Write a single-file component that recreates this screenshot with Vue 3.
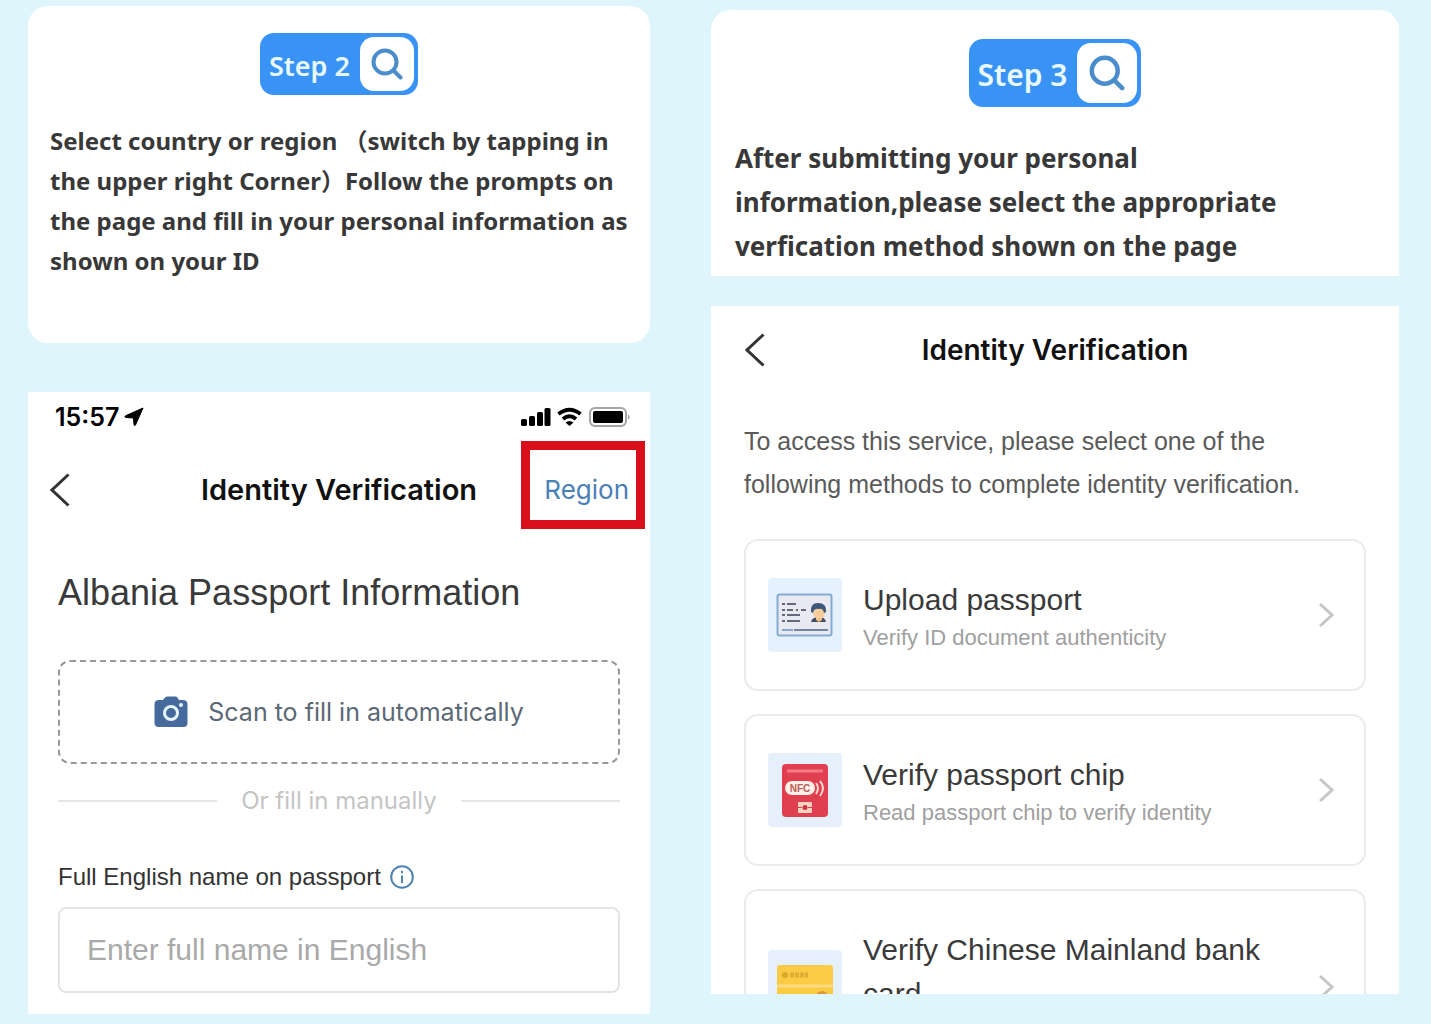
<script setup>
import { ref } from "vue";

const fullName = ref("");

const methods = [
  {
    id: "passport",
    title: ["Upload passport"],
    text: "Verify ID document authenticity",
  },
  {
    id: "chip",
    title: ["Verify passport chip"],
    text: "Read passport chip to verify identity",
  },
  {
    id: "bank",
    title: ["Verify Chinese Mainland bank", "card"],
    text: "",
  },
];
</script>

<template>
  <main class="page">
    <div class="column">
      <section class="step">
        <h2 class="badge">
          <span class="name">Step 2</span>
          <span class="lens">
            <svg viewBox="0 0 32 32" aria-hidden="true">
              <circle cx="14" cy="14" r="11.500" />
              <path d="M22.500 22.500L29.500 29.500" />
            </svg>
          </span>
        </h2>
        <p>
          Select country or region （switch by tapping in<br />
          the upper right Corner）Follow the prompts on<br />
          the page and fill in your personal information as<br />
          shown on your ID
        </p>
      </section>

      <section class="screen">
        <div class="status">
          <span class="time">15:57</span>
          <svg class="arrow" viewBox="0 0 20 20" aria-hidden="true">
            <path
              d="M19 1L11.500 18Q10.500 19.500 10 17.500L9.500 11L2 10.500Q0 10 1.500 8.800Z"
              stroke="#000"
              stroke-linejoin="round"
            />
          </svg>
          <svg class="signals" viewBox="0 0 110 20" aria-hidden="true">
            <rect x="0" y="12" width="6" height="7" rx="1.500" />
            <rect x="8" y="9" width="6" height="10" rx="1.500" />
            <rect x="16" y="5" width="6" height="14" rx="1.500" />
            <rect x="23.500" y="1" width="6" height="18" rx="1.500" />
            <path class="wave" d="M37.500 7Q48.500 -1.500 59.500 7" />
            <path class="wave" d="M42 12Q48.500 6.500 55 12" />
            <path d="M44.500 15.500Q48.500 12.500 52.500 15.500L48.500 19Z" />
            <rect class="shell" x="69" y="1" width="36" height="18" rx="5" />
            <rect x="72" y="4" width="30" height="12" rx="2" />
            <path class="tip" d="M107 7Q110 10 107 13Z" />
          </svg>
        </div>

        <header class="bar with-region">
          <button class="back" type="button" aria-label="Back">
            <svg viewBox="0 0 20 34" aria-hidden="true"><path d="M18.500 1.500L2 17L18.500 32.500" /></svg>
          </button>
          <h1>Identity Verification</h1>
          <button class="region" type="button">Region</button>
        </header>

        <form class="form" @submit.prevent>
          <h3>Albania Passport Information</h3>
          <button class="scan" type="button">
            <svg viewBox="0 0 34 32" aria-hidden="true">
              <path
                class="body"
                d="M5 4H9L11 1.500Q12 0.500 13.500 0.500H21Q22.500 0.500 23.500 1.500L25 4H29Q33.500 4 33.500 8.500V27Q33.500 31 29.500 31H5Q0.500 31 0.500 27V8.500Q0.500 4 5 4Z"
              />
              <circle class="ring" cx="17" cy="17" r="6.500" />
              <circle class="dot" cx="27" cy="9" r="2" />
            </svg>
            <span>Scan to fill in automatically</span>
          </button>
          <div class="or"><span>Or fill in manually</span></div>
          <label for="full-name">
            Full English name on passport
            <svg viewBox="0 0 24 24" aria-hidden="true">
              <circle cx="12" cy="12" r="10.800" />
              <path d="M12 10.500V18M12 6V8.300" />
            </svg>
          </label>
          <input id="full-name" v-model="fullName" type="text" placeholder="Enter full name in English" />
        </form>
      </section>
    </div>

    <div class="column right">
      <section class="step large">
        <h2 class="badge">
          <span class="name">Step 3</span>
          <span class="lens">
            <svg viewBox="0 0 32 32" aria-hidden="true">
              <circle cx="14" cy="14" r="11.500" />
              <path d="M22.500 22.500L29.500 29.500" />
            </svg>
          </span>
        </h2>
        <p>
          After submitting your personal<br />
          information,please select the appropriate<br />
          verfication method shown on the page
        </p>
      </section>

      <section class="screen clipped">
        <header class="bar">
          <button class="back" type="button" aria-label="Back">
            <svg viewBox="0 0 20 34" aria-hidden="true"><path d="M18.500 1.500L2 17L18.500 32.500" /></svg>
          </button>
          <h1>Identity Verification</h1>
        </header>

        <div class="methods">
          <p>
            To access this service, please select one of the<br />
            following methods to complete identity verification.
          </p>
          <button v-for="m in methods" :key="m.id" class="method" type="button">
            <svg v-if="m.id === 'passport'" class="picture" viewBox="0 0 74 74" aria-hidden="true">
              <rect width="74" height="74" rx="4" fill="#e5f2fd" />
              <rect x="9.500" y="16.500" width="54" height="41" rx="2" fill="#e9eaf1" stroke="#84abd0" stroke-width="2" />
              <g stroke="#626a7b" stroke-width="2">
                <path d="M14 26H17M19 26H28M14 32H17M19 32H25M28 32H30M33 32H38M14 37H17M19 37H32M14 43H17M19 43H32" />
                <path d="M14 52H25" stroke="#89a7cb" />
                <path d="M26 52H60" stroke="#7184a3" />
              </g>
              <path d="M43 44Q44 39 51 39Q57 39 58 44Z" fill="#454e60" />
              <path d="M48 38H54V42L51 44L48 42Z" fill="#f2bd83" />
              <ellipse cx="51" cy="34" rx="6" ry="7" fill="#f5cc9c" />
              <path d="M43 34Q42 25 50 25Q59 25 58 34L56 35Q55 30 51 31Q46 30 45 35Z" fill="#3e5878" />
            </svg>
            <svg v-else-if="m.id === 'chip'" class="picture" viewBox="0 0 74 74" aria-hidden="true">
              <rect width="74" height="74" rx="4" fill="#e5f0fb" />
              <rect x="14" y="11" width="46" height="53" rx="4" fill="#df3f4e" />
              <path d="M19 18H55" stroke="#f67b84" stroke-width="3" />
              <rect x="17" y="28" width="30" height="14" rx="7" fill="#fff0e8" />
              <text x="32" y="39" text-anchor="middle">NFC</text>
              <path d="M48 30Q52 35 48 41M52 28Q58 35 52 43" fill="none" stroke="#ffd7cf" stroke-width="2" />
              <rect x="30" y="49" width="14" height="11" rx="1" fill="#ffd1c0" />
              <path d="M30 54.500H34M40 54.500H44" stroke="#df3f4e" />
              <circle cx="37" cy="54.500" r="2.500" fill="#c83440" />
            </svg>
            <svg v-else class="picture" viewBox="0 0 74 74" aria-hidden="true">
              <rect width="74" height="74" rx="4" fill="#e6f0fd" />
              <rect x="9" y="15" width="56" height="44" rx="3" fill="#fbcb43" />
              <circle cx="17" cy="25" r="3" fill="#d9a52c" />
              <path d="M22 25H40" stroke="#e0ad34" stroke-width="5" stroke-dasharray="4 1" />
              <path d="M9 36H65" stroke="#fddc83" stroke-width="3" />
              <circle cx="54" cy="47" r="6" fill="#df963b" />
            </svg>
            <span class="words">
              <span v-for="line in m.title" :key="line" class="title">{{ line }}</span>
              <span class="text">{{ m.text }}</span>
            </span>
            <svg class="next" viewBox="0 0 16 26" aria-hidden="true"><path d="M2 2L14 13L2 24" /></svg>
          </button>
        </div>
      </section>
    </div>
  </main>
</template>

<style>
body {
  margin: 0;
  background: #dff5fc;
}
</style>

<style scoped>
* {
  box-sizing: border-box;
}

h1,
h2,
h3,
p {
  margin: 0;
}

button {
  padding: 0;
  border: none;
  background: none;
  color: inherit;
  cursor: pointer;
}

svg {
  flex: none;
}

.page {
  display: grid;
  grid-template-columns: 622fr 688fr;
  column-gap: 61px;
  height: 100vh;
  padding: 0 32px 0 28px;
  overflow: hidden;
  font-family: "Liberation Sans", Arial, sans-serif;
}

.column {
  display: flex;
  flex-direction: column;
  gap: 49px;
  min-width: 0;
  min-height: 0;
  padding: 6px 0 10px;
}

.column.right {
  gap: 30px;
  padding: 10px 0 30px;
}

/* step cards */
.step {
  display: flex;
  flex-direction: column;
  align-items: center;
  padding: 27px 22px 62px;
  border-radius: 20px;
  background: #fff;
}

.step p {
  align-self: stretch;
  margin-top: 26px;
  color: #383838;
  font: 700 24px/40px "Noto Sans", "Noto Sans CJK SC", sans-serif;
  white-space: nowrap;
}

.badge {
  display: flex;
  align-items: center;
  gap: 10px;
  height: 62px;
  padding: 4px 4px 4px 9px;
  border-radius: 14px;
  background: #3993f4;
  color: #e8faff;
  font: 600 27px/50px "Noto Sans", sans-serif;
}

.name {
  padding-top: 4px;
}

.lens {
  display: flex;
  align-items: center;
  justify-content: center;
  width: 54px;
  height: 54px;
  border-radius: 14px;
  background: #fff;
}

.lens svg {
  width: 32px;
  height: 32px;
  fill: none;
  stroke: #4b8dcc;
  stroke-width: 4;
  stroke-linecap: round;
}

.step.large {
  padding: 29px 24px 8px;
  border-radius: 20px 20px 0 0;
}

.large p {
  margin-top: 29px;
  font-size: 26px;
  line-height: 44px;
}

.large .badge {
  height: 68px;
  font-size: 30px;
}

.large .lens {
  width: 60px;
  height: 60px;
}

.large .lens svg {
  width: 36px;
  height: 36px;
}

/* phone screens */
.screen {
  background: #fff;
}

.clipped {
  flex: 1;
  min-height: 0;
  overflow: hidden;
}

.status {
  display: flex;
  align-items: center;
  height: 49px;
  padding: 0 19px 0 27px;
}

.time {
  font: 600 25px/30px Inter, sans-serif;
}

.arrow {
  width: 20px;
  height: 20px;
  margin-left: 5px;
}

.signals {
  width: 110px;
  height: 20px;
  margin-left: auto;
}

.wave {
  fill: none;
  stroke: #000;
  stroke-width: 4;
}

.shell {
  fill: #fff;
  stroke: #a5a5a5;
  stroke-width: 2;
}

.tip {
  fill: #999;
}

.bar {
  display: grid;
  grid-template-columns: 1fr auto 1fr;
  align-items: center;
  height: 88px;
  padding: 0 34px;
}

.bar.with-region {
  height: 98px;
  padding: 0 5px;
}

.back {
  justify-self: start;
  display: flex;
}

.with-region .back {
  margin-left: 17px;
}

.back svg {
  width: 20px;
  height: 34px;
  fill: none;
  stroke: #333;
  stroke-width: 3;
}

.bar h1 {
  color: #111;
  font: 600 28px/36px Inter, sans-serif;
}

.with-region h1 {
  font-size: 29px;
}

.region {
  align-self: start;
  justify-self: end;
  height: 88px;
  padding: 10px 7px 0 14px;
  border: 9px solid #d90f1b;
  color: #4a80b5;
  font: 400 26px/36px Inter, sans-serif;
}

.form {
  display: flex;
  flex-direction: column;
  padding: 30px 30px 21px;
}

.form h3 {
  color: #3a3a3a;
  font-size: 36px;
  font-weight: 400;
  line-height: 48px;
  white-space: nowrap;
}

.scan {
  display: flex;
  align-items: center;
  justify-content: center;
  gap: 20px;
  height: 104px;
  margin-top: 43px;
  border: 2px dashed #999;
  border-radius: 12px;
  color: #5b6875;
  font: 400 25px/32px Inter, sans-serif;
}

.scan svg {
  width: 34px;
  height: 32px;
}

.body {
  fill: #456a9b;
}

.ring {
  fill: none;
  stroke: #e5f5ff;
  stroke-width: 3;
}

.dot {
  fill: #e5f5ff;
}

.or {
  display: flex;
  align-items: center;
  gap: 24px;
  margin-top: 21px;
  color: #c4c4c4;
  font: 400 24px/32px Inter, sans-serif;
}

.or::before,
.or::after {
  flex: 1;
  height: 2px;
  background: #e6e6e6;
  content: "";
}

label {
  display: flex;
  align-items: center;
  gap: 9px;
  margin-top: 44px;
  color: #333;
  font-size: 24px;
  line-height: 32px;
}

label svg {
  width: 24px;
  height: 24px;
  fill: none;
  stroke: #4d83b0;
  stroke-width: 2;
}

input {
  width: 100%;
  height: 86px;
  margin-top: 14px;
  padding: 0 27px;
  border: 2px solid #e4e4e4;
  border-radius: 8px;
  background: #fff;
  color: #333;
  font: 400 30px/40px "Liberation Sans", Arial, sans-serif;
}

input::placeholder {
  color: #a9a9a9;
}

/* verification methods */
.methods {
  display: flex;
  flex-direction: column;
  gap: 23px;
  padding: 26px 33px;
}

.methods p {
  margin-bottom: 10px;
  color: #5a5a5a;
  font-size: 25px;
  line-height: 43px;
  white-space: nowrap;
}

.method {
  display: flex;
  flex: none;
  align-items: center;
  padding: 35px 30px 35px 22px;
  border: 2px solid #ebebeb;
  border-radius: 14px;
  font-family: inherit;
  text-align: left;
}

.picture {
  width: 74px;
  height: 74px;
}

.picture text {
  fill: #ba5d5b;
  font: 700 10px "Liberation Sans", Arial, sans-serif;
}

.words {
  display: flex;
  flex: 1;
  flex-direction: column;
  margin-left: 21px;
  padding-top: 2px;
}

.title {
  color: #3a3a3a;
  font-size: 30px;
  line-height: 44px;
}

.text {
  min-height: 32px;
  color: #a0a0a0;
  font-size: 22px;
  line-height: 32px;
}

.next {
  width: 16px;
  height: 26px;
  fill: none;
  stroke: #c6c6c6;
  stroke-width: 3;
}
</style>
